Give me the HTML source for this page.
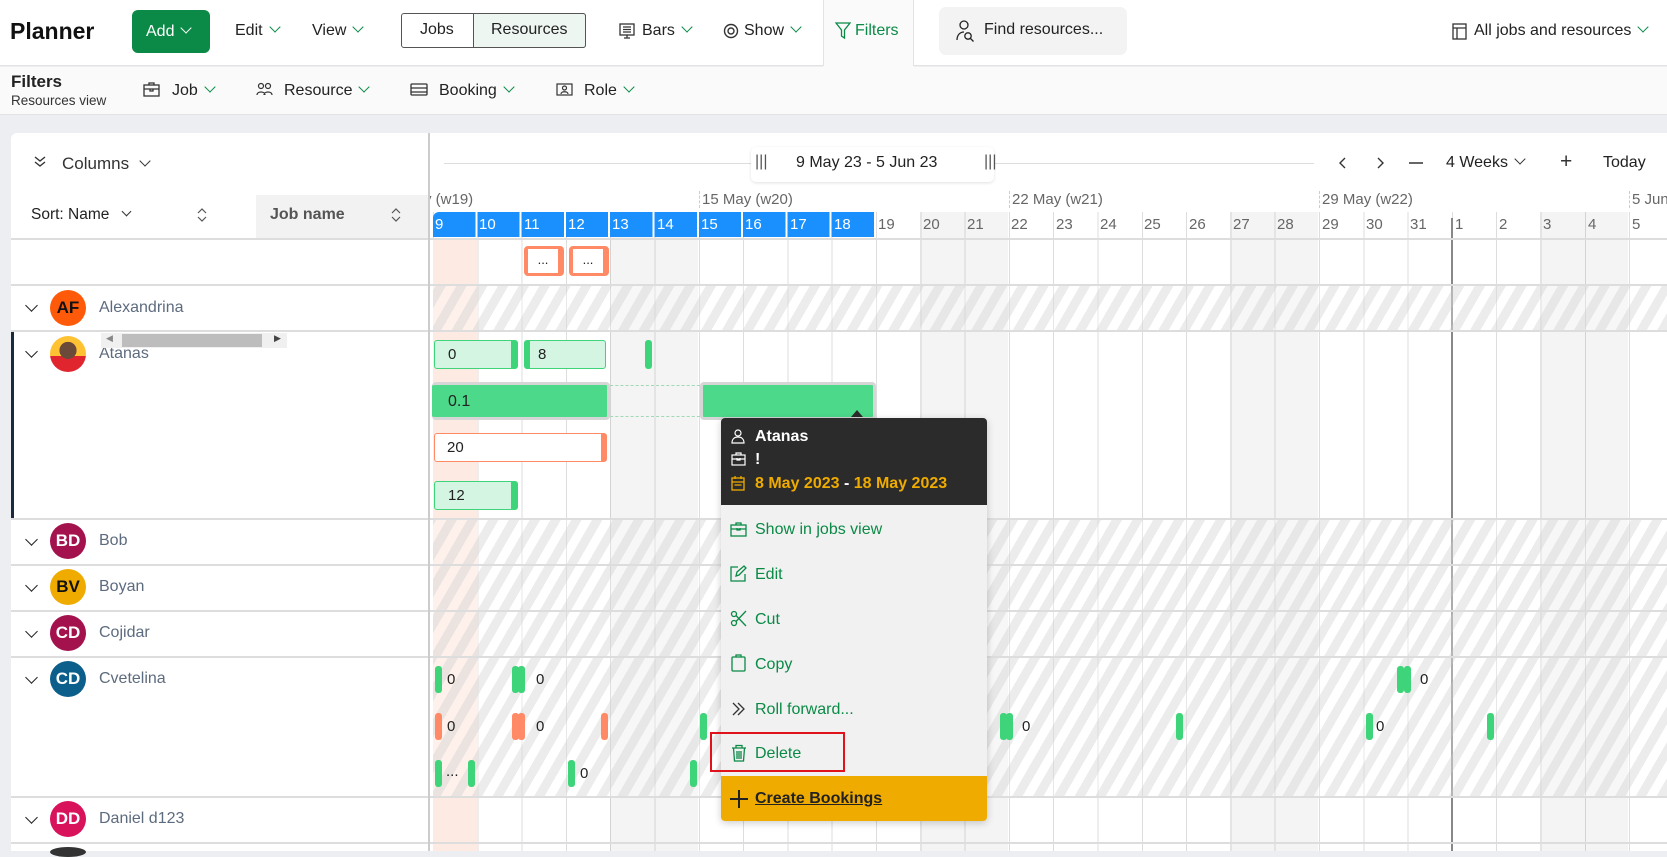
<!DOCTYPE html>
<html><head><meta charset="utf-8"><style>
*{box-sizing:border-box;margin:0;padding:0}
body{width:1667px;height:851px;overflow:hidden;position:relative;background:#eceef1;font-family:"Liberation Sans",sans-serif;color:#222;font-size:16px}
.a{position:absolute}
.chev{display:inline-block;width:8px;height:8px;border-right:1.6px solid #0a8a46;border-bottom:1.6px solid #0a8a46;transform:rotate(45deg);margin-left:8px;position:relative;top:-4px}
.chevd{border-color:#333}
.t{position:absolute;white-space:nowrap}
.hat{background:repeating-linear-gradient(-60deg,rgba(220,220,220,.55) 0 9px,rgba(255,255,255,.3) 9px 18px)}
.hl{position:absolute;left:11px;width:1656px;height:2px;background:#ddd}
.av{position:absolute;left:50px;width:36px;height:36px;border-radius:50%;font-weight:bold;font-size:17px;text-align:center;line-height:36px}
.nm{position:absolute;left:99px;color:#5d6b7e;font-size:16px}
.rc{position:absolute;left:27px;width:9px;height:9px;border-right:1.6px solid #222;border-bottom:1.6px solid #222;transform:rotate(45deg)}
.tk{position:absolute;width:7px;height:27px;border-radius:3px;background:#3dd47a}
.tk.o{background:#ff8a65}
.tn{position:absolute;font-size:15px}
.mi{position:absolute;left:729px;color:#0a8a46;font-size:16px}
</style></head><body>
<!-- top bar -->
<div class="a" style="left:0;top:0;width:1667px;height:66px;background:#fff;border-bottom:1px solid #e3e3e3"></div>
<div class="t" style="left:10px;top:18px;font-size:23px;font-weight:bold;color:#111">Planner</div>
<div class="a" style="left:132px;top:10px;width:78px;height:43px;background:#0a8a46;border-radius:6px;color:#fff;font-size:16px;line-height:43px;padding-left:14px">Add<span class="chev" style="border-color:#fff"></span></div>
<div class="t" style="left:235px;top:22px">Edit<span class="chev"></span></div>
<div class="t" style="left:312px;top:22px">View<span class="chev"></span></div>
<div class="a" style="left:401px;top:13px;width:185px;height:35px;border:1px solid #555;border-radius:3px;background:#fff"></div>
<div class="a" style="left:473px;top:13px;width:113px;height:35px;border:1px solid #555;border-radius:0 3px 3px 0;background:#eef6f2"></div>
<div class="t" style="left:420px;top:21px">Jobs</div>
<div class="t" style="left:491px;top:21px">Resources</div>
<svg class="a" style="left:618px;top:22px" width="18" height="18" viewBox="0 0 18 18" fill="none" stroke="#333" stroke-width="1.3"><rect x="2" y="2" width="14" height="11"/><path d="M5 5h8M5 7.5h8M5 10h8M9 13v3M6 16h6"/></svg>
<div class="t" style="left:642px;top:22px">Bars<span class="chev"></span></div>
<svg class="a" style="left:723px;top:23px" width="16" height="16" viewBox="0 0 16 16" fill="none" stroke="#333" stroke-width="1.4"><circle cx="8" cy="8" r="6.5"/><circle cx="8" cy="8" r="3"/></svg>
<div class="t" style="left:744px;top:22px">Show<span class="chev"></span></div>
<div class="a" style="left:823px;top:0;width:91px;height:67px;background:#fafafa;border-left:1px solid #e3e3e3;border-right:1px solid #e3e3e3"></div>
<svg class="a" style="left:835px;top:22px" width="16" height="18" viewBox="0 0 16 18" fill="none" stroke="#0a8a46" stroke-width="1.3"><path d="M1 1h14l-5.5 7v8l-3-2V8z"/></svg>
<div class="t" style="left:855px;top:22px;color:#0a8a46">Filters</div>
<div class="a" style="left:939px;top:7px;width:188px;height:48px;background:#f3f3f3;border-radius:7px"></div>
<svg class="a" style="left:955px;top:20px" width="20" height="22" viewBox="0 0 20 22" fill="none" stroke="#222" stroke-width="1.3"><circle cx="9" cy="5" r="4"/><path d="M2 20c0-5 3-8 7-8"/><circle cx="13" cy="16" r="3.2"/><path d="M15.5 18.5l3 3"/></svg>
<div class="t" style="left:984px;top:21px;font-weight:500">Find resources...</div>
<svg class="a" style="left:1452px;top:23px" width="15" height="17" viewBox="0 0 15 17" fill="none" stroke="#333" stroke-width="1.3"><rect x="1" y="1" width="13" height="15"/><path d="M1 5h13M5 5v11"/></svg>
<div class="t" style="left:1474px;top:22px">All jobs and resources<span class="chev"></span></div>
<!-- filters bar -->
<div class="a" style="left:0;top:67px;width:1667px;height:48px;background:#fafafa;border-bottom:1px solid #e3e3e3"></div>
<div class="a" style="left:823px;top:66px;width:91px;height:2px;background:#fafafa"></div>
<div class="t" style="left:11px;top:72px;font-weight:bold;font-size:17px">Filters</div>
<div class="t" style="left:11px;top:93px;font-size:13.5px;color:#333">Resources view</div>
<svg class="a" style="left:143px;top:82px" width="17" height="15" viewBox="0 0 17 15" fill="none" stroke="#333" stroke-width="1.3"><rect x="1" y="3" width="15" height="11"/><path d="M6 3V1h5v2M1 7h15M7 7v2h3V7"/></svg>
<div class="t" style="left:172px;top:82px">Job<span class="chev"></span></div>
<svg class="a" style="left:256px;top:82px" width="17" height="15" viewBox="0 0 17 15" fill="none" stroke="#333" stroke-width="1.2"><circle cx="5" cy="4" r="2.5"/><circle cx="12" cy="4" r="2.5"/><path d="M1 13c0-4 8-4 8 0M8 13c0-4 8-4 8 0"/></svg>
<div class="t" style="left:284px;top:82px">Resource<span class="chev"></span></div>
<svg class="a" style="left:410px;top:82px" width="18" height="15" viewBox="0 0 18 15" fill="none" stroke="#333" stroke-width="1.3"><rect x="1" y="2" width="16" height="11" rx="1"/><path d="M1 6h16M1 10h16"/></svg>
<div class="t" style="left:439px;top:82px">Booking<span class="chev"></span></div>
<svg class="a" style="left:556px;top:82px" width="17" height="15" viewBox="0 0 17 15" fill="none" stroke="#333" stroke-width="1.2"><rect x="1" y="2" width="15" height="11"/><circle cx="8.5" cy="6" r="2"/><path d="M5 12c0-3 7-3 7 0"/></svg>
<div class="t" style="left:584px;top:82px">Role<span class="chev"></span></div>
<!-- main panel -->
<div class="a" style="left:11px;top:133px;width:1656px;height:718px;background:#fff;border-radius:6px 0 0 0"></div>
<!-- timeline body background -->
<div class="a" style="left:433px;top:212px;width:1234px;height:639px;background:repeating-linear-gradient(90deg,#ddd 0 1px,transparent 1px 44.3px)"></div>
<div class="a" style="left:433px;top:239px;width:44px;height:612px;background:#fdebe3"></div>
<div class="a" style="left:610px;top:212px;width:88px;height:639px;background:rgba(0,0,0,.045)"></div>
<div class="a" style="left:920px;top:212px;width:88px;height:639px;background:rgba(0,0,0,.045)"></div>
<div class="a" style="left:1230px;top:212px;width:88px;height:639px;background:rgba(0,0,0,.045)"></div>
<div class="a" style="left:1540px;top:212px;width:88px;height:639px;background:rgba(0,0,0,.045)"></div>
<div class="a" style="left:1451px;top:218px;width:2px;height:633px;background:#888"></div>
<!-- hatched rows -->
<div class="a hat" style="left:433px;top:286px;width:1234px;height:45px"></div>
<div class="a hat" style="left:433px;top:520px;width:1234px;height:136px"></div>
<div class="a hat" style="left:433px;top:658px;width:1234px;height:138px"></div>
<!-- row lines -->
<div class="hl" style="top:238px"></div>
<div class="hl" style="top:284px"></div>
<div class="hl" style="top:330px"></div>
<div class="hl" style="top:518px"></div>
<div class="hl" style="top:564px"></div>
<div class="hl" style="top:610px"></div>
<div class="hl" style="top:656px"></div>
<div class="hl" style="top:796px"></div>
<div class="hl" style="top:842px"></div>
<!-- left column -->
<div class="a" style="left:428px;top:133px;width:2px;height:718px;background:#ccc"></div>
<div class="a" style="left:11px;top:196px;width:417px;height:42px;background:#fff"></div>
<div class="a" style="left:256px;top:195px;width:172px;height:43px;background:#f2f2f2"></div>
<div class="t" style="left:34px;top:153px;font-size:17px;color:#333">&#8595;&#xFE0E;</div>
<svg class="a" style="left:33px;top:155px" width="14" height="14" viewBox="0 0 14 14" fill="none" stroke="#333" stroke-width="1.4"><path d="M2 2l5 4 5-4M2 7l5 4 5-4"/></svg>
<div class="a" style="left:33px;top:150px;width:16px;height:20px;background:#fff"></div>
<svg class="a" style="left:33px;top:155px" width="14" height="14" viewBox="0 0 14 14" fill="none" stroke="#333" stroke-width="1.4"><path d="M2 2l5 4 5-4M2 7l5 4 5-4"/></svg>
<div class="t" style="left:62px;top:154px;font-size:17px;color:#333">Columns<span class="chev chevd" style="margin-left:12px"></span></div>
<div class="t" style="left:31px;top:206px;font-size:15.5px;color:#222">Sort: Name<span class="chev chevd" style="margin-left:14px;width:7px;height:7px"></span></div>
<svg class="a" style="left:196px;top:206px" width="12" height="18" viewBox="0 0 12 18" fill="none" stroke="#555" stroke-width="1.2"><path d="M2 7l4-4 4 4M2 11l4 4 4-4"/></svg>
<div class="t" style="left:270px;top:206px;font-size:16px;font-weight:bold;color:#555">Job name</div>
<svg class="a" style="left:390px;top:206px" width="12" height="18" viewBox="0 0 12 18" fill="none" stroke="#555" stroke-width="1.2"><path d="M2 7l4-4 4 4M2 11l4 4 4-4"/></svg>
<!-- rows left -->
<div class="rc" style="top:301px"></div><div class="av" style="top:290px;background:#ff5a0a;color:#111">AF</div><div class="nm" style="top:299px">Alexandrina</div>
<div class="a" style="left:11px;top:332px;width:3px;height:186px;background:#1a2a3a"></div>
<div class="rc" style="top:347px"></div>
<div class="av" style="top:336px;background:radial-gradient(circle at 50% 40%,#6b4a3a 0 30%,transparent 31%),linear-gradient(#ffc233 0 55%,#e0252f 56%)"></div>
<div class="nm" style="top:345px">Atanas</div>
<div class="a" style="left:101px;top:333px;width:186px;height:15px;background:#f0f0f0"></div>
<div class="a" style="left:122px;top:334px;width:140px;height:13px;background:#bdbdbd"></div>
<div class="t" style="left:106px;top:333px;font-size:9px;color:#888">&#9664;</div>
<div class="t" style="left:274px;top:333px;font-size:9px;color:#444">&#9654;</div>
<div class="rc" style="top:535px"></div><div class="av" style="top:523px;background:#a3124d;color:#fff">BD</div><div class="nm" style="top:532px">Bob</div>
<div class="rc" style="top:581px"></div><div class="av" style="top:569px;background:#efab00;color:#111">BV</div><div class="nm" style="top:578px">Boyan</div>
<div class="rc" style="top:627px"></div><div class="av" style="top:615px;background:#a3124d;color:#fff">CD</div><div class="nm" style="top:624px">Cojidar</div>
<div class="rc" style="top:673px"></div><div class="av" style="top:661px;background:#0b5f8a;color:#fff">CD</div><div class="nm" style="top:670px">Cvetelina</div>
<div class="rc" style="top:813px"></div><div class="av" style="top:801px;background:#d8125b;color:#fff">DD</div><div class="nm" style="top:810px">Daniel d123</div>
<div class="a" style="left:50px;top:847px;width:36px;height:10px;border-radius:50%;background:#333"></div>
<!-- timeline header -->
<div class="a" style="left:444px;top:163px;width:870px;height:1px;background:#ddd"></div>
<div class="a" style="left:751px;top:147px;width:243px;height:35px;background:#fff;border-radius:5px;box-shadow:0 1px 3px rgba(0,0,0,.12)"></div>
<div class="t" style="left:755px;top:153px;font-size:16px;color:#555">|||</div>
<div class="t" style="left:796px;top:154px;font-size:16px">9 May 23 - 5 Jun 23</div>
<div class="t" style="left:984px;top:153px;font-size:16px;color:#555">|||</div>
<svg class="a" style="left:1336px;top:156px" width="90" height="14" viewBox="0 0 90 14" fill="none" stroke="#333" stroke-width="1.4"><path d="M9 2L4 7l5 5M42 2l5 5-5 5M73 7h14"/></svg>
<div class="t" style="left:1446px;top:154px;font-size:16px">4 Weeks<span class="chev chevd"></span></div>
<div class="t" style="left:1560px;top:150px;font-size:21px;color:#333">+</div>
<div class="t" style="left:1603px;top:154px;font-size:16px">Today</div>
<div class="a" style="left:430px;top:190px;width:1237px;height:22px;background:#fff;overflow:hidden;font-size:15px;color:#666">
 <div class="t" style="left:-6px;top:1px">y (w19)</div>
 <div class="t" style="left:269px;top:1px;border-left:1px dashed #ccc;padding-left:2px">15 May (w20)</div>
 <div class="t" style="left:579px;top:1px;border-left:1px dashed #ccc;padding-left:2px">22 May (w21)</div>
 <div class="t" style="left:889px;top:1px;border-left:1px dashed #ccc;padding-left:2px">29 May (w22)</div>
 <div class="t" style="left:1199px;top:1px;border-left:1px dashed #ccc;padding-left:2px">5 Jun</div>
</div>
<div class="a" style="left:430px;top:212px;width:3px;height:25px;background:#fff"></div>
<div class="a" style="left:433px;top:212px;width:443px;height:25px;background:repeating-linear-gradient(90deg,#1a90ff 0 42.3px,#fff 42.3px 44.3px);border-radius:6px 0 0 0"></div>
<div class="a" style="left:433px;top:212px;width:1234px;height:25px;font-size:15px;color:#666">
<span class="t" style="left:2px;top:4px;color:#fff">9</span><span class="t" style="left:46px;top:4px;color:#fff">10</span><span class="t" style="left:91px;top:4px;color:#fff">11</span><span class="t" style="left:135px;top:4px;color:#fff">12</span><span class="t" style="left:179px;top:4px;color:#fff">13</span><span class="t" style="left:224px;top:4px;color:#fff">14</span><span class="t" style="left:268px;top:4px;color:#fff">15</span><span class="t" style="left:312px;top:4px;color:#fff">16</span><span class="t" style="left:357px;top:4px;color:#fff">17</span><span class="t" style="left:401px;top:4px;color:#fff">18</span><span class="t" style="left:445px;top:4px">19</span><span class="t" style="left:490px;top:4px">20</span><span class="t" style="left:534px;top:4px">21</span><span class="t" style="left:578px;top:4px">22</span><span class="t" style="left:623px;top:4px">23</span><span class="t" style="left:667px;top:4px">24</span><span class="t" style="left:711px;top:4px">25</span><span class="t" style="left:756px;top:4px">26</span><span class="t" style="left:800px;top:4px">27</span><span class="t" style="left:844px;top:4px">28</span><span class="t" style="left:889px;top:4px">29</span><span class="t" style="left:933px;top:4px">30</span><span class="t" style="left:977px;top:4px">31</span><span class="t" style="left:1022px;top:4px">1</span><span class="t" style="left:1066px;top:4px">2</span><span class="t" style="left:1110px;top:4px">3</span><span class="t" style="left:1155px;top:4px">4</span><span class="t" style="left:1199px;top:4px">5</span>
</div>
<!-- unassigned chips -->
<div class="a" style="left:524px;top:246px;width:40px;height:30px;border:3px solid #ff8a65;border-left-width:4px;border-right-width:6px;border-radius:4px;background:#fff;font-size:13px;text-align:center;line-height:22px">...</div>
<div class="a" style="left:569px;top:246px;width:40px;height:30px;border:3px solid #ff8a65;border-left-width:4px;border-right-width:6px;border-radius:4px;background:#fff;font-size:13px;text-align:center;line-height:22px">...</div>
<!-- Atanas bars -->
<div class="a" style="left:434px;top:340px;width:84px;height:29px;background:#d4f5e2;border:1px solid #3dd47a;border-right:7px solid #3dd47a;border-radius:3px;font-size:15px;padding:5px 0 0 13px">0</div>
<div class="a" style="left:524px;top:340px;width:82px;height:29px;background:#d4f5e2;border:1px solid #3dd47a;border-left:6px solid #3dd47a;border-radius:3px;font-size:15px;padding:5px 0 0 8px">8</div>
<div class="tk" style="left:645px;top:340px;height:29px"></div>
<div class="a" style="left:600px;top:385px;width:105px;height:32px;border-top:1px dashed #9fd9b5;border-bottom:1px dashed #9fd9b5"></div>
<div class="a" style="left:432px;top:382px;width:178px;height:38px;background:#4cd98a;border:3px solid #d6d6d6;border-left:none;border-radius:4px;font-size:16px;padding:8px 0 0 16px">0.1</div>
<div class="a" style="left:700px;top:382px;width:176px;height:38px;background:#4cd98a;border:3px solid #d6d6d6;border-radius:4px"></div>
<div class="a" style="left:851px;top:410px;width:0;height:0;border-left:6px solid transparent;border-right:6px solid transparent;border-bottom:7px solid #2b2b2b"></div>
<div class="a" style="left:434px;top:433px;width:173px;height:29px;background:#fff;border:1px solid #ff8a65;border-right:6px solid #ff8a65;border-radius:3px;font-size:15px;padding:5px 0 0 12px">20</div>
<div class="a" style="left:434px;top:481px;width:84px;height:29px;background:#d4f5e2;border:1px solid #3dd47a;border-right:7px solid #3dd47a;border-radius:3px;font-size:15px;padding:5px 0 0 13px">12</div>
<!-- Cvetelina ticks -->
<div class="tk" style="left:435px;top:666px"></div><div class="tn" style="left:447px;top:671px">0</div>
<div class="tk" style="left:512px;top:666px"></div><div class="tk" style="left:518px;top:666px"></div><div class="tn" style="left:536px;top:671px">0</div>
<div class="tk" style="left:1397px;top:666px"></div><div class="tk" style="left:1404px;top:666px"></div><div class="tn" style="left:1420px;top:671px">0</div>
<div class="tk o" style="left:435px;top:713px"></div><div class="tn" style="left:447px;top:718px">0</div>
<div class="tk o" style="left:512px;top:713px"></div><div class="tk o" style="left:518px;top:713px"></div><div class="tn" style="left:536px;top:718px">0</div>
<div class="tk o" style="left:601px;top:713px"></div>
<div class="tk" style="left:700px;top:713px"></div>
<div class="tk" style="left:1000px;top:713px"></div><div class="tk" style="left:1006px;top:713px"></div><div class="tn" style="left:1022px;top:718px">0</div>
<div class="tk" style="left:1176px;top:713px"></div>
<div class="tk" style="left:1366px;top:713px"></div><div class="tn" style="left:1376px;top:718px">0</div>
<div class="tk" style="left:1487px;top:713px"></div>
<div class="tk" style="left:435px;top:760px"></div><div class="tn" style="left:446px;top:763px">...</div><div class="tk" style="left:468px;top:760px"></div>
<div class="tk" style="left:568px;top:760px"></div><div class="tn" style="left:580px;top:765px">0</div>
<div class="tk" style="left:690px;top:760px"></div>
<!-- context menu -->
<div class="a" style="left:721px;top:418px;width:266px;height:403px;background:#f1f1f1;border-radius:4px;box-shadow:0 2px 8px rgba(0,0,0,.2)"></div>
<div class="a" style="left:721px;top:418px;width:266px;height:87px;background:#2b2b2b;border-radius:4px 4px 0 0"></div>
<svg class="a" style="left:731px;top:429px" width="14" height="15" viewBox="0 0 14 15" fill="none" stroke="#fff" stroke-width="1.2"><circle cx="7" cy="4" r="3"/><path d="M1 14c0-4 2.5-6 6-6s6 2 6 6z"/></svg>
<div class="t" style="left:755px;top:428px;color:#fff;font-weight:bold;font-size:16px">Atanas</div>
<svg class="a" style="left:731px;top:452px" width="15" height="14" viewBox="0 0 15 14" fill="none" stroke="#fff" stroke-width="1.2"><rect x="1" y="3" width="13" height="10"/><path d="M5 3V1h5v2M1 7h13M6 6v2h3V6"/></svg>
<div class="t" style="left:755px;top:451px;color:#fff;font-weight:bold;font-size:16px">!</div>
<svg class="a" style="left:731px;top:475px" width="14" height="16" viewBox="0 0 14 16" fill="none" stroke="#efab00" stroke-width="1.3"><rect x="1" y="3" width="12" height="12"/><path d="M1 7h12M4 1v3M10 1v3M3.5 10h7"/></svg>
<div class="t" style="left:755px;top:475px;color:#efab00;font-weight:bold;font-size:16px">8 May 2023 <span style="color:#fff">-</span> 18 May 2023</div>
<svg class="a" style="left:730px;top:522px" width="17" height="15" viewBox="0 0 17 15" fill="none" stroke="#0a8a46" stroke-width="1.3"><rect x="1" y="3" width="15" height="11"/><path d="M6 3V1h5v2M1 7h15M7 6v2h3V6"/></svg>
<div class="mi" style="left:755px;top:521px">Show in jobs view</div>
<svg class="a" style="left:730px;top:565px" width="17" height="17" viewBox="0 0 17 17" fill="none" stroke="#0a8a46" stroke-width="1.3"><path d="M8 2H1v14h14V9"/><path d="M6 11l1-4 7-6 2 2-7 7z"/></svg>
<div class="mi" style="left:755px;top:566px">Edit</div>
<svg class="a" style="left:730px;top:610px" width="17" height="17" viewBox="0 0 17 17" fill="none" stroke="#0a8a46" stroke-width="1.3"><circle cx="4" cy="4" r="2.5"/><circle cx="4" cy="13" r="2.5"/><path d="M6 5.5L16 16M6 11.5L16 1"/></svg>
<div class="mi" style="left:755px;top:611px">Cut</div>
<svg class="a" style="left:731px;top:654px" width="15" height="18" viewBox="0 0 15 18" fill="none" stroke="#0a8a46" stroke-width="1.3"><rect x="1" y="3" width="13" height="14" rx="1"/><path d="M5 3V1h5v2"/></svg>
<div class="mi" style="left:755px;top:656px">Copy</div>
<svg class="a" style="left:731px;top:702px" width="16" height="14" viewBox="0 0 16 14" fill="none" stroke="#333" stroke-width="1.3"><path d="M2 1l6 6-6 6M7 1l6 6-6 6"/></svg>
<div class="mi" style="left:755px;top:701px">Roll forward...</div>
<svg class="a" style="left:731px;top:744px" width="16" height="18" viewBox="0 0 16 18" fill="none" stroke="#0a8a46" stroke-width="1.3"><path d="M1 4h14M5 4V1.5h6V4M2.5 4l1 13h9l1-13M6 7v8M8 7v8M10 7v8"/></svg>
<div class="mi" style="left:755px;top:745px">Delete</div>
<div class="a" style="left:710px;top:732px;width:135px;height:40px;border:2px solid #e0121c"></div>
<div class="a" style="left:721px;top:776px;width:266px;height:45px;background:#efab00;border-radius:0 0 4px 4px"></div>
<svg class="a" style="left:729px;top:789px" width="20" height="20" viewBox="0 0 20 20" fill="none" stroke="#222" stroke-width="2"><path d="M10 1v18M1 10h18"/></svg>
<div class="t" style="left:755px;top:790px;font-weight:bold;text-decoration:underline;color:#222;font-size:16px">Create Bookings</div>
</body></html>
